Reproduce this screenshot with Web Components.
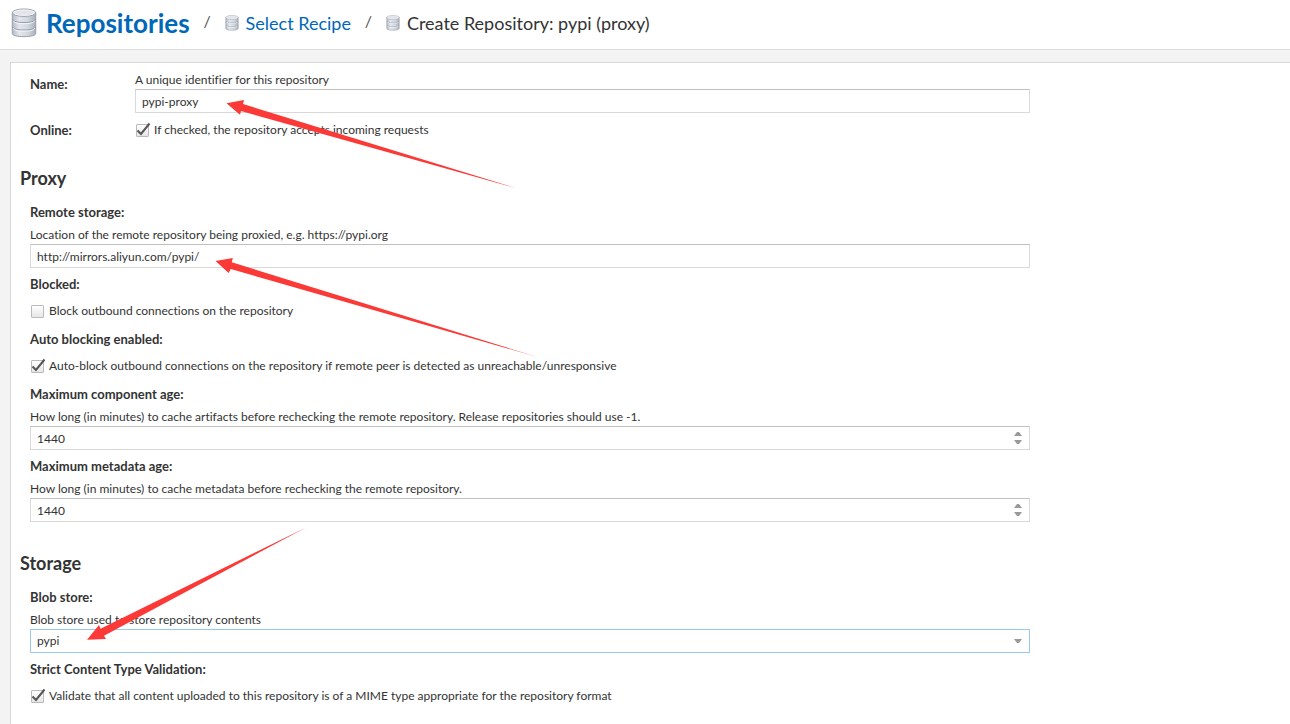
<!DOCTYPE html>
<html lang="en">
<head>
<meta charset="utf-8">
<title>Create Repository</title>
<style>
  body { margin: 0; font: 12px/16px Lato, "Open Sans", sans-serif; font-variant-ligatures: none; color: #333; background: #f3f3f3; }
</style>
</head>
<body>
<repo-page>
  <repo-breadcrumb slot="header">
    <repo-crumb kind="root" href="#repositories">Repositories</repo-crumb>
    <repo-crumb href="#recipe">Select Recipe</repo-crumb>
    <repo-crumb>Create Repository: pypi (proxy)</repo-crumb>
  </repo-breadcrumb>
  <form-section class="first">
    <text-field inline label="Name:" hint="A unique identifier for this repository" value="pypi-proxy"></text-field>
    <check-field inline label="Online:" text="If checked, the repository accepts incoming requests" checked></check-field>
  </form-section>
  <form-section heading="Proxy">
    <text-field label="Remote storage:" hint="Location of the remote repository being proxied, e.g. https://pypi.org" value="http://mirrors.aliyun.com/pypi/"></text-field>
    <check-field label="Blocked:" text="Block outbound connections on the repository"></check-field>
    <check-field label="Auto blocking enabled:" text="Auto-block outbound connections on the repository if remote peer is detected as unreachable/unresponsive" checked></check-field>
    <number-field label="Maximum component age:" hint="How long (in minutes) to cache artifacts before rechecking the remote repository. Release repositories should use -1." value="1440"></number-field>
    <number-field label="Maximum metadata age:" hint="How long (in minutes) to cache metadata before rechecking the remote repository." value="1440"></number-field>
  </form-section>
  <form-section heading="Storage">
    <select-field label="Blob store:" hint="Blob store used to store repository contents" value="pypi"></select-field>
    <check-field label="Strict Content Type Validation:" text="Validate that all content uploaded to this repository is of a MIME type appropriate for the repository format" checked></check-field>
  </form-section>
  <note-arrows slot="notes"></note-arrows>
</repo-page>

<script>
const make = (el, html) => { el.attachShadow({ mode: 'open' }).innerHTML = html; };

customElements.define('repo-page', class extends HTMLElement {
  constructor() {
    super();
    make(this, `<style>
      :host { display: flex; flex-direction: column; min-height: 100vh; position: relative; overflow: hidden; }
      header { background: #fff; border-bottom: 1px solid #ddd; }
      main { flex: 1; margin: 12px 0 0 10px; padding: 9px 9px 16px; background: #fff;
             border: 1px solid #d9d9d9; border-width: 1px 0 0 1px; }
      form { display: flex; flex-direction: column; gap: 29px; max-width: 1010px; }
      ::slotted(.first) { --field-gap: 5px; margin-bottom: -5px; }
    </style>
    <header><slot name="header"></slot></header>
    <main><form><slot></slot></form></main>
    <slot name="notes"></slot>`);
  }
});

customElements.define('repo-breadcrumb', class extends HTMLElement {
  constructor() {
    super();
    make(this, `<style>
      :host { display: block; }
      nav { display: flex; align-items: center; height: 46px; padding: 0 0 3px 10px; }
    </style><nav aria-label="Breadcrumb"><slot></slot></nav>`);
  }
});

/* Stacked-disk icon shared by every crumb; drawn on a 28 x 32 grid. */
const DISKS = `<svg viewBox="0 0 28 32" aria-hidden="true">
  <defs><linearGradient id="g"><stop offset="0" stop-color="#b4bbc5"/><stop offset=".3" stop-color="#e3e7ec"/><stop offset=".65" stop-color="#d3d8df"/><stop offset="1" stop-color="#a9b1bd"/></linearGradient></defs>
  <path d="M1.500 5v22c0 2.500 5 3.500 12.500 3.500S26.500 29.500 26.500 27V5z" fill="url(#g)" stroke="#939aa4"/>
  <path d="M1.500 12c1 2.500 6 3.500 12.500 3.500s11.500-1 12.500-3.500M1.500 20c1 2.500 6 3.500 12.500 3.500s11.500-1 12.500-3.500" fill="none" stroke="#8d95a1"/>
  <path d="M2.500 13.500c1 2.500 6 3.200 11.500 3.200s10.500-.7 11.500-3.200M2.500 21.500c1 2.500 6 3.200 11.500 3.200s10.500-.7 11.500-3.200" fill="none" stroke="#f7f8fa"/>
  <ellipse cx="14" cy="5" rx="12.500" ry="4" fill="#e1e5ea" stroke="#999fa9"/>
  <ellipse cx="14" cy="5" rx="11" ry="2.800" fill="none" stroke="#f4f6f8" stroke-width=".8"/>
</svg>`;

customElements.define('repo-crumb', class extends HTMLElement {
  connectedCallback() {
    const root = this.getAttribute('kind') === 'root';
    const href = this.getAttribute('href');
    make(this, `<style>
      :host { display: flex; align-items: center; }
      .sep { width: 35px; padding-bottom: 4px; text-align: center; font-size: 16px; color: #555; }
      svg { flex: none; width: 14px; height: 16px; margin-right: 7px; }
      a, span.text { font-size: 18px; line-height: 32px; white-space: nowrap; color: #333; }
      a { color: #0067b9; text-decoration: none; }
      .root { display: flex; align-items: center; }
      .root svg { width: 28px; height: 30px; margin-right: 8px; }
      .root a { font-size: 26px; font-weight: 700; }
    </style>
    ${root ? '' : '<span class="sep">/</span>'}
    ${root ? `<div class="root">${DISKS}<a href="${href}"><slot></slot></a></div>`
      : DISKS + (href ? `<a href="${href}"><slot></slot></a>` : '<span class="text" aria-current="page"><slot></slot></span>')}`);
  }
});

customElements.define('form-section', class extends HTMLElement {
  connectedCallback() {
    const h = this.getAttribute('heading');
    make(this, `<style>
      :host { display: block; }
      h2 { margin: 0 0 12px; font-size: 18px; line-height: 24px; font-weight: 700; }
      .fields { display: flex; flex-direction: column; gap: var(--field-gap, 6px); padding-left: 10px; }
    </style>${h ? `<h2>${h}</h2>` : ''}<div class="fields"><slot></slot></div>`);
  }
});

const FIELD_CSS = `
  :host { display: grid; row-gap: 5px; }
  :host([inline]) { grid-template-columns: 105px 1fr; }
  .label { font-size: 13px; line-height: 20px; font-weight: 700; }
  :host([inline]) .label { line-height: 24px; }
  .body { display: grid; row-gap: 1px; min-width: 0; }
  .hint { margin: 0; line-height: 16px; }
  .box { display: flex; position: relative; }
  input, select { box-sizing: border-box; width: 100%; height: 24px; margin: 0; padding: 0 6px; font: inherit;
    color: #333; background: #fff; border: 1px solid #d9d9d9; border-top-color: #c0c0c0; border-radius: 0;
    appearance: none; outline: none; }
`;

class Field extends HTMLElement {
  connectedCallback() {
    const a = n => this.getAttribute(n) || '';
    make(this, `<style>${FIELD_CSS}${this.css()}</style>
      <label class="label" for="c">${a('label')}</label>
      <div class="body"><p class="hint" id="h">${a('hint')}</p><div class="box">${this.control(a('value'))}</div></div>`);
    this.ready();
  }
  css() { return ''; }
  ready() {}
}

customElements.define('text-field', class extends Field {
  control(v) { return `<input id="c" type="text" aria-describedby="h" value="${v}">`; }
});

customElements.define('number-field', class extends Field {
  css() {
    return `input { appearance: textfield; }
      input::-webkit-inner-spin-button { appearance: none; margin: 0; }
      .spin { position: absolute; right: 8px; top: 4px; display: grid; }
      button { display: block; width: 8px; height: 8px; padding: 0; border: 0; background: none; }
      svg { display: block; width: 8px; height: 8px; fill: #999; }`;
  }
  control(v) {
    return `<input id="c" type="number" aria-describedby="h" value="${v}">
      <div class="spin">
        <button type="button" aria-label="Increase"><svg viewBox="0 0 8 8"><path d="M0 6l3-4h2l3 4z"/></svg></button>
        <button type="button" aria-label="Decrease"><svg viewBox="0 0 8 8"><path d="M0 2l3 4h2l3-4z"/></svg></button>
      </div>`;
  }
  ready() {
    const i = this.shadowRoot.querySelector('input');
    const [up, down] = this.shadowRoot.querySelectorAll('button');
    up.onclick = () => i.stepUp();
    down.onclick = () => i.stepDown();
  }
});

customElements.define('select-field', class extends Field {
  css() {
    return `select { border-color: #99c9ec; }
      svg { position: absolute; right: 8px; top: 10px; width: 8px; height: 4px; fill: #999; pointer-events: none; }`;
  }
  control(v) {
    return `<select id="c" aria-describedby="h"><option>${v}</option></select>
      <svg viewBox="0 0 8 4" aria-hidden="true"><path d="M0 0l3 4h2l3-4z"/></svg>`;
  }
});

customElements.define('check-field', class extends HTMLElement {
  connectedCallback() {
    make(this, `<style>${FIELD_CSS}
      .row { display: flex; align-items: center; height: 24px; }
      .tick { position: relative; display: flex; margin: 0 5px 0 1px; }
      input { width: 13px; height: 13px; padding: 0; border-color: #bbb; border-radius: 1px;
        background: linear-gradient(#fff, #e6e6e6); }
      svg { position: absolute; left: 0; bottom: 0; width: 15px; height: 15px; fill: none; stroke: #555; pointer-events: none; }
      input:not(:checked) + svg { display: none; }
    </style>
    <span class="label" id="l">${this.getAttribute('label')}</span>
    <div class="row"><span class="tick"><input id="c" type="checkbox" aria-describedby="l" ${this.hasAttribute('checked') ? 'checked' : ''}>
      <svg viewBox="0 0 15 15" aria-hidden="true"><path d="M1.500 8.500l3.500 3.500 8.500-10.500" stroke-width="2"/></svg></span>
      <label for="c">${this.getAttribute('text')}</label></div>`);
  }
});

/* Red callout arrows laid over the form. */
customElements.define('note-arrows', class extends HTMLElement {
  constructor() {
    super();
    make(this, `<style>
      :host { position: absolute; left: 0; top: 0; pointer-events: none; }
      svg { display: block; fill: #fb3937; }
    </style>
    <svg width="600" height="700" viewBox="0 0 600 700" aria-hidden="true">
      <path d="M226.500 103.200L244 100l-1 4L517 188.500 241 111l-1 3.800z"/>
      <path d="M215.500 261l17.300-3-1 4.300L539 357.500 230.700 269l-2 4z"/>
      <path d="M87 639.800L99 625l1.500 3.700L306 527.500 104 635.700l2 3.200z"/>
    </svg>`);
  }
});
</script>
</body>
</html>
